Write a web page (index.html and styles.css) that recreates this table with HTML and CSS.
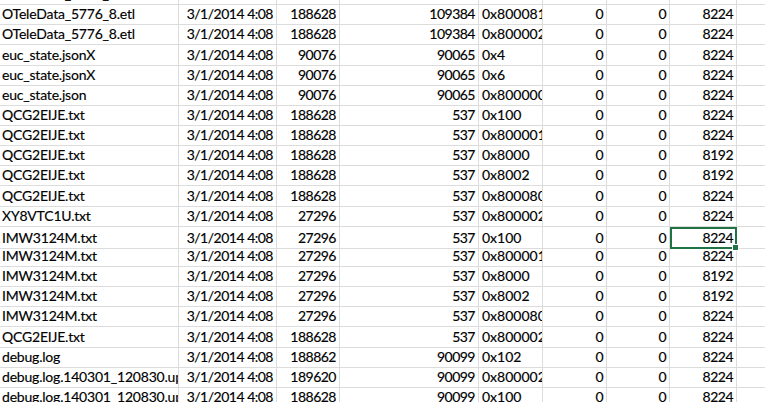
FILE: index.html
```html
<!DOCTYPE html>
<html>
<head>
<meta charset="utf-8">
<link rel="stylesheet" href="styles.css">
</head>
<body>
<div class="sheet">
  <div class="row"><div class="c a">OTeleData_5776_8.etl</div><div class="c b">3/1/2014 4:08</div><div class="c n">124280</div><div class="c d">109384</div><div class="c e">0x8102</div><div class="c n">0</div><div class="c n">0</div><div class="c h">8192</div><div class="c i"></div></div>
  <div class="row"><div class="c a">OTeleData_5776_8.etl</div><div class="c b">3/1/2014 4:08</div><div class="c n">188628</div><div class="c d">109384</div><div class="c e">0x80008100</div><div class="c n">0</div><div class="c n">0</div><div class="c h">8224</div><div class="c i"></div></div>
  <div class="row"><div class="c a">OTeleData_5776_8.etl</div><div class="c b">3/1/2014 4:08</div><div class="c n">188628</div><div class="c d">109384</div><div class="c e">0x80000200</div><div class="c n">0</div><div class="c n">0</div><div class="c h">8224</div><div class="c i"></div></div>
  <div class="row"><div class="c a">euc_state.jsonX</div><div class="c b">3/1/2014 4:08</div><div class="c n">90076</div><div class="c d">90065</div><div class="c e">0x4</div><div class="c n">0</div><div class="c n">0</div><div class="c h">8224</div><div class="c i"></div></div>
  <div class="row"><div class="c a">euc_state.jsonX</div><div class="c b">3/1/2014 4:08</div><div class="c n">90076</div><div class="c d">90065</div><div class="c e">0x6</div><div class="c n">0</div><div class="c n">0</div><div class="c h">8224</div><div class="c i"></div></div>
  <div class="row"><div class="c a">euc_state.json</div><div class="c b">3/1/2014 4:08</div><div class="c n">90076</div><div class="c d">90065</div><div class="c e">0x80000000</div><div class="c n">0</div><div class="c n">0</div><div class="c h">8224</div><div class="c i"></div></div>
  <div class="row"><div class="c a">QCG2EIJE.txt</div><div class="c b">3/1/2014 4:08</div><div class="c n">188628</div><div class="c d">537</div><div class="c e">0x100</div><div class="c n">0</div><div class="c n">0</div><div class="c h">8224</div><div class="c i"></div></div>
  <div class="row"><div class="c a">QCG2EIJE.txt</div><div class="c b">3/1/2014 4:08</div><div class="c n">188628</div><div class="c d">537</div><div class="c e">0x80000100</div><div class="c n">0</div><div class="c n">0</div><div class="c h">8224</div><div class="c i"></div></div>
  <div class="row"><div class="c a">QCG2EIJE.txt</div><div class="c b">3/1/2014 4:08</div><div class="c n">188628</div><div class="c d">537</div><div class="c e">0x8000</div><div class="c n">0</div><div class="c n">0</div><div class="c h">8192</div><div class="c i"></div></div>
  <div class="row"><div class="c a">QCG2EIJE.txt</div><div class="c b">3/1/2014 4:08</div><div class="c n">188628</div><div class="c d">537</div><div class="c e">0x8002</div><div class="c n">0</div><div class="c n">0</div><div class="c h">8192</div><div class="c i"></div></div>
  <div class="row"><div class="c a">QCG2EIJE.txt</div><div class="c b">3/1/2014 4:08</div><div class="c n">188628</div><div class="c d">537</div><div class="c e">0x80008000</div><div class="c n">0</div><div class="c n">0</div><div class="c h">8224</div><div class="c i"></div></div>
  <div class="row"><div class="c a">XY8VTC1U.txt</div><div class="c b">3/1/2014 4:08</div><div class="c n">27296</div><div class="c d">537</div><div class="c e">0x80000200</div><div class="c n">0</div><div class="c n">0</div><div class="c h">8224</div><div class="c i"></div></div>
  <div class="row"><div class="c a">IMW3124M.txt</div><div class="c b">3/1/2014 4:08</div><div class="c n">27296</div><div class="c d">537</div><div class="c e">0x100</div><div class="c n">0</div><div class="c n">0</div><div class="c h sel">8224<span class="handle"></span></div><div class="c i"></div></div>
  <div class="row"><div class="c a">IMW3124M.txt</div><div class="c b">3/1/2014 4:08</div><div class="c n">27296</div><div class="c d">537</div><div class="c e">0x80000100</div><div class="c n">0</div><div class="c n">0</div><div class="c h">8224</div><div class="c i"></div></div>
  <div class="row"><div class="c a">IMW3124M.txt</div><div class="c b">3/1/2014 4:08</div><div class="c n">27296</div><div class="c d">537</div><div class="c e">0x8000</div><div class="c n">0</div><div class="c n">0</div><div class="c h">8192</div><div class="c i"></div></div>
  <div class="row"><div class="c a">IMW3124M.txt</div><div class="c b">3/1/2014 4:08</div><div class="c n">27296</div><div class="c d">537</div><div class="c e">0x8002</div><div class="c n">0</div><div class="c n">0</div><div class="c h">8192</div><div class="c i"></div></div>
  <div class="row"><div class="c a">IMW3124M.txt</div><div class="c b">3/1/2014 4:08</div><div class="c n">27296</div><div class="c d">537</div><div class="c e">0x80008000</div><div class="c n">0</div><div class="c n">0</div><div class="c h">8224</div><div class="c i"></div></div>
  <div class="row"><div class="c a">QCG2EIJE.txt</div><div class="c b">3/1/2014 4:08</div><div class="c n">188628</div><div class="c d">537</div><div class="c e">0x80000200</div><div class="c n">0</div><div class="c n">0</div><div class="c h">8224</div><div class="c i"></div></div>
  <div class="row"><div class="c a">debug.log</div><div class="c b">3/1/2014 4:08</div><div class="c n">188862</div><div class="c d">90099</div><div class="c e">0x102</div><div class="c n">0</div><div class="c n">0</div><div class="c h">8224</div><div class="c i"></div></div>
  <div class="row"><div class="c a">debug.log.140301_120830.up</div><div class="c b">3/1/2014 4:08</div><div class="c n">189620</div><div class="c d">90099</div><div class="c e">0x80000200</div><div class="c n">0</div><div class="c n">0</div><div class="c h">8224</div><div class="c i"></div></div>
  <div class="row"><div class="c a">debug.log.140301_120830.up</div><div class="c b">3/1/2014 4:08</div><div class="c n">188628</div><div class="c d">90099</div><div class="c e">0x100</div><div class="c n">0</div><div class="c n">0</div><div class="c h">8224</div><div class="c i"></div></div>
</div>
</body>
</html>
```
FILE: styles.css
```css
html, body {
  margin: 0;
  padding: 0;
  background: #ffffff;
  overflow: hidden;
}
body {
  width: 765px;
  height: 402px;
}
.sheet {
  margin-top: -15px;
  font-family: "Lato", "Liberation Sans", sans-serif;
  font-size: 14px;
  color: #000000;
  -webkit-text-stroke: 0.15px #000000;
}
.row {
  display: grid;
  grid-template-columns: 179px 98px 63px 139px 64px 64px 63px 67px 60px;
  height: 20.15px;
}
.c {
  box-sizing: border-box;
  border-right: 1px solid #dcdcdc;
  border-bottom: 1px solid #dcdcdc;
  white-space: nowrap;
  overflow: hidden;
  display: flex;
  align-items: flex-end;
  padding: 0 2px 1px 2px;
  line-height: 18px;
}
.b, .n, .d, .h {
  justify-content: flex-end;
  letter-spacing: -0.5px;
  padding-right: 3px;
}
.a {
  padding-left: 2px;
  letter-spacing: -0.2px;
}
.e {
  padding-left: 3px;
}
.sel {
  position: relative;
  overflow: visible;
  border: 2px solid #217346;
  padding: 0 2px 0 2px;
}
.handle {
  position: absolute;
  right: -4px;
  bottom: -4px;
  width: 5px;
  height: 5px;
  background: #217346;
  border: 1px solid #ffffff;
}
```
